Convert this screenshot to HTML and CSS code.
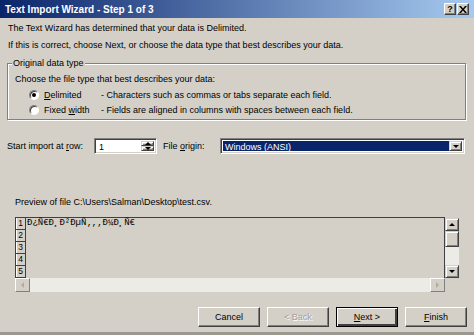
FILE: index.html
```html
<!DOCTYPE html>
<html>
<head>
    <title>Text Import Wizard - Step 1 of 3</title>
    <link rel="stylesheet" href="styles.css">
</head>
<body>
    <div class="window">
        <div class="titlebar">
            <span class="title">Text Import Wizard - Step 1 of 3</span>
            <div class="caption-buttons">
                <span class="cbtn help">?</span>
                <span class="cbtn close">
                    <svg width="8" height="7" viewBox="0 0 8 7"><path d="M0 0h2l2 2.5L6 0h2L5 3.5 8 7H6L4 4.5 2 7H0l3-3.5z" fill="#000"/></svg>
                </span>
            </div>
        </div>

        <div class="content">
            <p class="intro">The Text Wizard has determined that your data is Delimited.</p>
            <p class="intro">If this is correct, choose Next, or choose the data type that best describes your data.</p>

            <fieldset class="group">
                <legend>Original data type</legend>
                <p class="choose">Choose the file type that best describes your data:</p>
                <div class="radio-row">
                    <span class="radio checked"></span>
                    <span class="radio-label"><u>D</u>elimited</span>
                    <span class="radio-desc">- Characters such as commas or tabs separate each field.</span>
                </div>
                <div class="radio-row">
                    <span class="radio"></span>
                    <span class="radio-label">Fixed <u>w</u>idth</span>
                    <span class="radio-desc">- Fields are aligned in columns with spaces between each field.</span>
                </div>
            </fieldset>

            <div class="import-row">
                <span class="row-label">Start import at <u>r</u>ow:</span>
                <div class="spin">
                    <span class="spin-value">1</span>
                    <div class="spin-buttons">
                        <span class="spin-btn"><i class="tri up"></i></span>
                        <span class="spin-btn"><i class="tri down"></i></span>
                    </div>
                </div>
                <span class="origin-label">File <u>o</u>rigin:</span>
                <div class="select">
                    <span class="select-value">Windows (ANSI)</span>
                    <span class="select-btn"><i class="tri down"></i></span>
                </div>
            </div>

            <p class="preview-label">Preview of file C:\Users\Salman\Desktop\test.csv.</p>

            <div class="preview">
                <div class="preview-body">
                    <div class="preview-line"><span class="num">1</span><span class="data">Ð¿Ñ€Ð¸Ð²ÐµÑ‚,,Ð¼Ð¸Ñ€</span></div>
                    <div class="preview-line"><span class="num">2</span><span class="data"></span></div>
                    <div class="preview-line"><span class="num">3</span><span class="data"></span></div>
                    <div class="preview-line"><span class="num">4</span><span class="data"></span></div>
                    <div class="preview-line"><span class="num">5</span><span class="data"></span></div>
                </div>
                <div class="vscroll">
                    <span class="sbtn"><i class="tri up"></i></span>
                    <span class="thumb"></span>
                    <span class="track"></span>
                    <span class="sbtn"><i class="tri down"></i></span>
                </div>
                <div class="hscroll">
                    <span class="sbtn"><i class="tri left"></i></span>
                    <span class="track"></span>
                    <span class="sbtn"><i class="tri right"></i></span>
                </div>
                <div class="corner"></div>
            </div>

            <div class="buttons">
                <span class="btn">Cancel</span>
                <span class="btn disabled">&lt; Back</span>
                <span class="btn default"><u>N</u>ext &gt;</span>
                <span class="btn"><u>F</u>inish</span>
            </div>
        </div>
    </div>
</body>
</html>
```

FILE: styles.css
```css
body {
    margin: 0;
    font-family: "Liberation Sans", Arial, sans-serif;
    font-size: 9px;
    color: #000;
    background: #d4d0c8;
}
.window {
    width: 474px;
    height: 335px;
    box-sizing: border-box;
    background: #d4d0c8;
    border-bottom: 3px solid #9a9890;
}
u {
    text-decoration: underline;
    text-underline-offset: 1px;
}

/* title bar */
.titlebar {
    height: 18px;
    display: flex;
    align-items: center;
    justify-content: space-between;
    padding: 0 5px 0 5px;
    background: linear-gradient(to right, #0a246a, #a6caf0);
}
.title {
    color: #fff;
    font-weight: bold;
    font-size: 10px;
}
.caption-buttons {
    display: flex;
    gap: 1px;
}
.cbtn {
    width: 12px;
    height: 12px;
    box-sizing: border-box;
    display: flex;
    align-items: center;
    justify-content: center;
    background: #d4d0c8;
    border: 1px solid;
    border-color: #fff #404040 #404040 #fff;
    box-shadow: inset -1px -1px 0 #808080;
    font-weight: bold;
    font-size: 9px;
    line-height: 1;
}

/* main */
.content {
    padding: 2px 7px 0 7px;
}
.intro {
    margin: 0;
    padding-left: 1px;
    line-height: 17px;
}
.group {
    margin: 3px 0 0 0;
    padding: 0 7px 2px 7px;
    border: 1px solid #808080;
    box-shadow: inset 1px 1px 0 #fff, 1px 1px 0 #fff;
    width: 459px;
    box-sizing: border-box;
}
.group legend {
    padding: 0 1px;
    margin-left: -3px;
    line-height: 12px;
    background: #d4d0c8;
}
.choose {
    margin: 3px 0 1px 0;
    line-height: 14px;
}
.radio-row {
    display: flex;
    align-items: center;
    height: 15px;
    padding-left: 14px;
}
.radio {
    width: 10px;
    height: 10px;
    box-sizing: border-box;
    border-radius: 50%;
    background: #fff;
    border: 1px solid;
    border-color: #808080 #fff #fff #808080;
    box-shadow: inset 1px 1px 0 #404040;
    display: flex;
    align-items: center;
    justify-content: center;
}
.radio.checked::after {
    content: "";
    width: 4px;
    height: 4px;
    border-radius: 50%;
    background: #000;
}
.radio-label {
    width: 57px;
    margin-left: 5px;
}

/* import row */
.import-row {
    display: flex;
    align-items: center;
    margin-top: 18px;
    height: 16px;
}
.row-label {
    width: 87px;
}
.spin, .select {
    height: 16px;
    box-sizing: border-box;
    display: flex;
    background: #fff;
    border: 1px solid;
    border-color: #808080 #fff #fff #808080;
    box-shadow: inset 1px 1px 0 #404040, inset -1px -1px 0 #d4d0c8;
    padding: 2px;
}
.spin {
    width: 63px;
}
.spin-value {
    flex: 1;
    line-height: 12px;
    padding-left: 2px;
}
.spin-buttons {
    width: 13px;
    display: flex;
    flex-direction: column;
}
.spin-btn, .select-btn, .sbtn {
    flex: 1;
    display: flex;
    align-items: center;
    justify-content: center;
    background: #d4d0c8;
    border: 1px solid;
    border-color: #d4d0c8 #404040 #404040 #d4d0c8;
    box-shadow: inset 1px 1px 0 #fff, inset -1px -1px 0 #808080;
}
.origin-label {
    margin-left: 6px;
    width: 57px;
}
.select {
    width: 245px;
}
.select-value {
    flex: 1;
    background: #0a246a;
    color: #fff;
    line-height: 12px;
    padding-left: 2px;
}
.select-btn {
    flex: none;
    width: 13px;
    box-sizing: border-box;
}
.tri {
    width: 0;
    height: 0;
    border: 3px solid transparent;
}
.tri.up {
    border-top: 0;
    border-bottom: 3px solid #000;
}
.tri.down {
    border-bottom: 0;
    border-top: 3px solid #000;
}
.tri.left {
    border-left: 0;
    border-right: 3px solid #b0aca4;
}
.tri.right {
    border-right: 0;
    border-left: 3px solid #b0aca4;
}

/* preview */
.preview-label {
    margin: 41px 0 0 8px;
    line-height: 14px;
}
.preview {
    margin: 8px 0 0 8px;
    width: 444px;
    display: grid;
    grid-template-columns: 430px 14px;
    grid-template-rows: 61px 14px;
}
.preview-body {
    border: 1px solid #404040;
    border-bottom: 0;
    display: flex;
    flex-direction: column;
}
.preview-line {
    display: flex;
    height: 12px;
}
.num {
    width: 10px;
    box-sizing: border-box;
    border-right: 1px solid #404040;
    border-bottom: 1px solid #404040;
    box-shadow: inset 1px 0 0 #fff;
    font-size: 8.5px;
    line-height: 11px;
    text-align: center;
}
.data {
    font-family: "Liberation Mono", "Courier New", monospace;
    font-size: 9px;
    line-height: 11px;
    padding-left: 1px;
}
.vscroll {
    display: flex;
    flex-direction: column;
    padding-top: 1px;
}
.vscroll .sbtn {
    flex: none;
    height: 11px;
}
.vscroll .thumb {
    height: 16px;
    box-sizing: border-box;
    background: #d4d0c8;
    border: 1px solid;
    border-color: #d4d0c8 #404040 #404040 #d4d0c8;
    box-shadow: inset 1px 1px 0 #fff, inset -1px -1px 0 #808080;
}
.vscroll .track, .hscroll .track {
    flex: 1;
    background: #ecebe6;
}
.hscroll {
    display: flex;
}
.hscroll .sbtn {
    flex: none;
    width: 13px;
    border-color: #fff #808080 #808080 #fff;
    box-shadow: none;
}
.corner {
    background: #d4d0c8;
}

/* buttons */
.buttons {
    display: flex;
    justify-content: flex-end;
    gap: 7px;
    margin-top: 15px;
}
.btn {
    width: 62px;
    height: 20px;
    box-sizing: border-box;
    display: flex;
    align-items: center;
    justify-content: center;
    border: 1px solid;
    border-color: #fff #404040 #404040 #fff;
    box-shadow: inset -1px -1px 0 #808080;
    background: #d4d0c8;
}
.btn.default {
    border: 1px solid #000;
    box-shadow: inset 1px 1px 0 #fff, inset -2px -2px 0 #404040;
}
.btn.disabled {
    color: #a0a0a0;
    text-shadow: 1px 1px 0 #fff;
}
```
